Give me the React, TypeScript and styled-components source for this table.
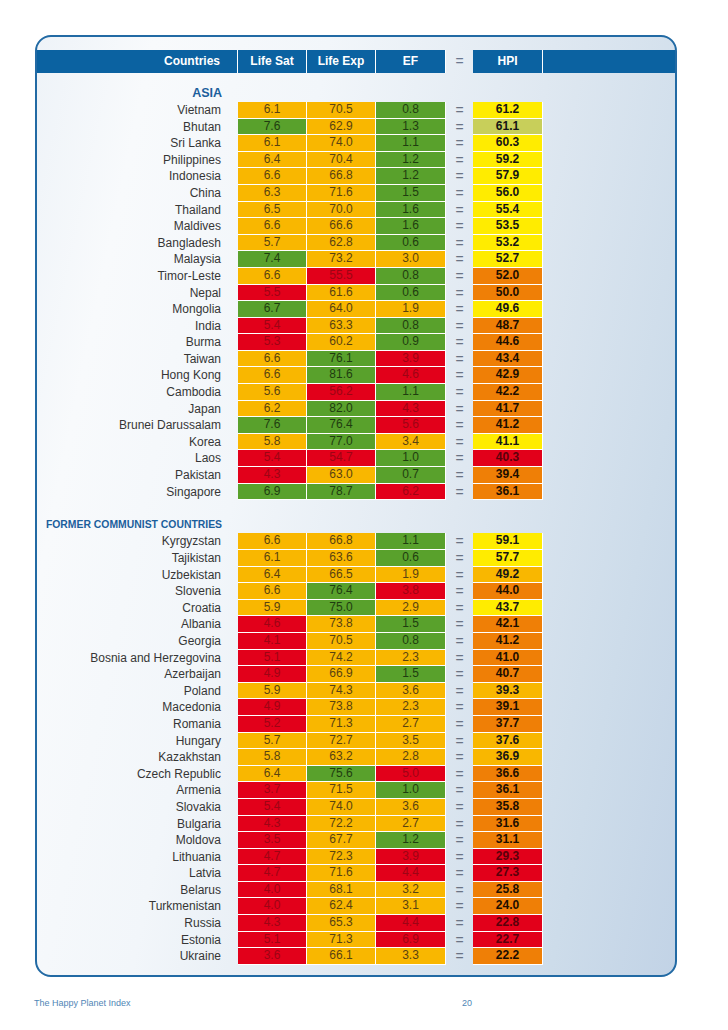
import React from "react";
import styled, { createGlobalStyle } from "styled-components";

const GlobalStyle = createGlobalStyle`
  html, body { margin: 0; padding: 0; background: #ffffff; }
  body { font-family: "Liberation Sans", Arial, Helvetica, sans-serif; }
`;

type Tone = "o" | "g" | "r" | "Y" | "L" | "O" | "D" | "R";

const BG: Record<Tone, string> = {
  o: "#f9b700",
  g: "#59a12c",
  r: "#e2001a",
  Y: "#ffec00",
  L: "#c8cf5a",
  O: "#f9b700",
  D: "#ef7f06",
  R: "#e2001a",
};

const FG: Record<Tone, string> = {
  o: "#5a4310",
  g: "#1f3d10",
  r: "#9d0414",
  Y: "#151515",
  L: "#151515",
  O: "#151515",
  D: "#1c0e00",
  R: "#5a000a",
};

const COLS = "201px 69px 69px 70px 27px 70px 1fr";
const ROW_H = "16.6px";

const Page = styled.div`
  width: 728px;
  height: 1030px;
  box-sizing: border-box;
  padding: 35px 0 0 35px;
  overflow: hidden;
`;

const Card = styled.div`
  width: 642px;
  box-sizing: border-box;
  border: 2px solid #226aa4;
  border-radius: 16px;
  padding: 13px 0 10px;
  background: linear-gradient(102deg, #eef3f8 0%, #f8fafc 14%, #f2f6fa 35%, #dfe8f1 62%, #cddcea 85%, #c2d3e6 100%);
`;

const HeaderBar = styled.div`
  display: grid;
  grid-template-columns: ${COLS};
  height: 23px;
  margin-bottom: 12.4px;
`;

const HeadCell = styled.div<{ $align?: "right" | "center"; $blank?: boolean; $last?: boolean }>`
  background: ${(p) => (p.$blank ? "transparent" : "#0b62a1")};
  color: ${(p) => (p.$blank ? "#6b7890" : "#ffffff")};
  font-weight: ${(p) => (p.$blank ? 400 : 700)};
  font-size: ${(p) => (p.$blank ? "14px" : "12px")};
  line-height: 23px;
  text-align: ${(p) => p.$align ?? "center"};
  padding-right: ${(p) => (p.$align === "right" ? "17px" : "0")};
  border-right: ${(p) => (p.$blank || p.$last ? "0" : "1px solid #ffffff")};
  white-space: nowrap;
`;

const Row = styled.div`
  display: grid;
  grid-template-columns: ${COLS};
  height: ${ROW_H};
`;

const Name = styled.div`
  text-align: right;
  padding-right: 17px;
  font-size: 12px;
  line-height: ${ROW_H};
  color: #363636;
  white-space: nowrap;
`;

const SectionTitle = styled.div<{ $size: number }>`
  text-align: right;
  padding-right: 16px;
  font-size: ${(p) => p.$size}px;
  font-weight: 700;
  line-height: ${ROW_H};
  color: #1c5f9c;
  white-space: nowrap;
`;

const Value = styled.div<{ $tone: Tone; $bold?: boolean }>`
  background: ${(p) => BG[p.$tone]};
  color: ${(p) => FG[p.$tone]};
  font-size: 12px;
  font-weight: ${(p) => (p.$bold ? 700 : 400)};
  line-height: 15.6px;
  text-align: center;
  border-right: 1px solid #ffffff;
  border-bottom: 1px solid #ffffff;
`;

const Eq = styled.div`
  text-align: center;
  font-size: 14px;
  line-height: ${ROW_H};
  color: #6a7384;
`;

const Footer = styled.div`
  display: grid;
  grid-template-columns: 428px auto;
  margin: 21px 0 0 -1px;
  font-size: 9px;
  line-height: 11px;
  color: #4f86b6;
`;

type Entry = [string, string, string, string, string];

const asia: Entry[] = [
  ["Vietnam", "6.1", "70.5", "0.8", "61.2"],
  ["Bhutan", "7.6", "62.9", "1.3", "61.1"],
  ["Sri Lanka", "6.1", "74.0", "1.1", "60.3"],
  ["Philippines", "6.4", "70.4", "1.2", "59.2"],
  ["Indonesia", "6.6", "66.8", "1.2", "57.9"],
  ["China", "6.3", "71.6", "1.5", "56.0"],
  ["Thailand", "6.5", "70.0", "1.6", "55.4"],
  ["Maldives", "6.6", "66.6", "1.6", "53.5"],
  ["Bangladesh", "5.7", "62.8", "0.6", "53.2"],
  ["Malaysia", "7.4", "73.2", "3.0", "52.7"],
  ["Timor-Leste", "6.6", "55.5", "0.8", "52.0"],
  ["Nepal", "5.5", "61.6", "0.6", "50.0"],
  ["Mongolia", "6.7", "64.0", "1.9", "49.6"],
  ["India", "5.4", "63.3", "0.8", "48.7"],
  ["Burma", "5.3", "60.2", "0.9", "44.6"],
  ["Taiwan", "6.6", "76.1", "3.9", "43.4"],
  ["Hong Kong", "6.6", "81.6", "4.6", "42.9"],
  ["Cambodia", "5.6", "56.2", "1.1", "42.2"],
  ["Japan", "6.2", "82.0", "4.3", "41.7"],
  ["Brunei Darussalam", "7.6", "76.4", "5.6", "41.2"],
  ["Korea", "5.8", "77.0", "3.4", "41.1"],
  ["Laos", "5.4", "54.7", "1.0", "40.3"],
  ["Pakistan", "4.3", "63.0", "0.7", "39.4"],
  ["Singapore", "6.9", "78.7", "6.2", "36.1"],
];
const asiaTones = [
  "oogY", "gogL", "oogY", "oogY", "oogY", "oogY", "oogY", "oogY", "oogY", "gooY",
  "orgD", "rogD", "gooY", "rogD", "rogD", "ogrD", "ogrD", "orgD", "ogrD", "ggrD",
  "ogoY", "rrgR", "rogD", "ggrD",
];

const former: Entry[] = [
  ["Kyrgyzstan", "6.6", "66.8", "1.1", "59.1"],
  ["Tajikistan", "6.1", "63.6", "0.6", "57.7"],
  ["Uzbekistan", "6.4", "66.5", "1.9", "49.2"],
  ["Slovenia", "6.6", "76.4", "3.8", "44.0"],
  ["Croatia", "5.9", "75.0", "2.9", "43.7"],
  ["Albania", "4.6", "73.8", "1.5", "42.1"],
  ["Georgia", "4.1", "70.5", "0.8", "41.2"],
  ["Bosnia and Herzegovina", "5.1", "74.2", "2.3", "41.0"],
  ["Azerbaijan", "4.9", "66.9", "1.5", "40.7"],
  ["Poland", "5.9", "74.3", "3.6", "39.3"],
  ["Macedonia", "4.9", "73.8", "2.3", "39.1"],
  ["Romania", "5.2", "71.3", "2.7", "37.7"],
  ["Hungary", "5.7", "72.7", "3.5", "37.6"],
  ["Kazakhstan", "5.8", "63.2", "2.8", "36.9"],
  ["Czech Republic", "6.4", "75.6", "5.0", "36.6"],
  ["Armenia", "3.7", "71.5", "1.0", "36.1"],
  ["Slovakia", "5.4", "74.0", "3.6", "35.8"],
  ["Bulgaria", "4.3", "72.2", "2.7", "31.6"],
  ["Moldova", "3.5", "67.7", "1.2", "31.1"],
  ["Lithuania", "4.7", "72.3", "3.9", "29.3"],
  ["Latvia", "4.7", "71.6", "4.4", "27.3"],
  ["Belarus", "4.0", "68.1", "3.2", "25.8"],
  ["Turkmenistan", "4.0", "62.4", "3.1", "24.0"],
  ["Russia", "4.3", "65.3", "4.4", "22.8"],
  ["Estonia", "5.1", "71.3", "6.9", "22.7"],
  ["Ukraine", "3.6", "66.1", "3.3", "22.2"],
];
const formerTones = [
  "oogY", "oogY", "oooO", "ogrD", "ogoY", "rogD", "rogD", "rooD", "rogD", "oooO",
  "rooD", "rooD", "oooO", "oooO", "ogrD", "rogD", "rooD", "rooD", "rogD", "rorR",
  "rorR", "rooD", "rooD", "rorR", "rorR", "rooD",
];

const DataRow: React.FC<{ e: Entry; tones: string }> = ({ e, tones }) => {
  const t = tones.split("") as Tone[];
  return (
    <Row>
      <Name>{e[0]}</Name>
      <Value $tone={t[0]}>{e[1]}</Value>
      <Value $tone={t[1]}>{e[2]}</Value>
      <Value $tone={t[2]}>{e[3]}</Value>
      <Eq>=</Eq>
      <Value $tone={t[3]} $bold>
        {e[4]}
      </Value>
    </Row>
  );
};

export default function App() {
  return (
    <>
      <GlobalStyle />
      <Page>
        <Card>
          <HeaderBar>
            <HeadCell $align="right">Countries</HeadCell>
            <HeadCell>Life Sat</HeadCell>
            <HeadCell>Life Exp</HeadCell>
            <HeadCell>EF</HeadCell>
            <HeadCell $blank>=</HeadCell>
            <HeadCell>HPI</HeadCell>
            <HeadCell $last />
          </HeaderBar>

          <Row>
            <SectionTitle $size={12.5}>ASIA</SectionTitle>
          </Row>
          {asia.map((e, i) => (
            <DataRow key={e[0]} e={e} tones={asiaTones[i]} />
          ))}
          <Row />
          <Row>
            <SectionTitle $size={10.4}>FORMER COMMUNIST COUNTRIES</SectionTitle>
          </Row>
          {former.map((e, i) => (
            <DataRow key={e[0]} e={e} tones={formerTones[i]} />
          ))}
        </Card>
        <Footer>
          <span>The Happy Planet Index</span>
          <span>20</span>
        </Footer>
      </Page>
    </>
  );
}
